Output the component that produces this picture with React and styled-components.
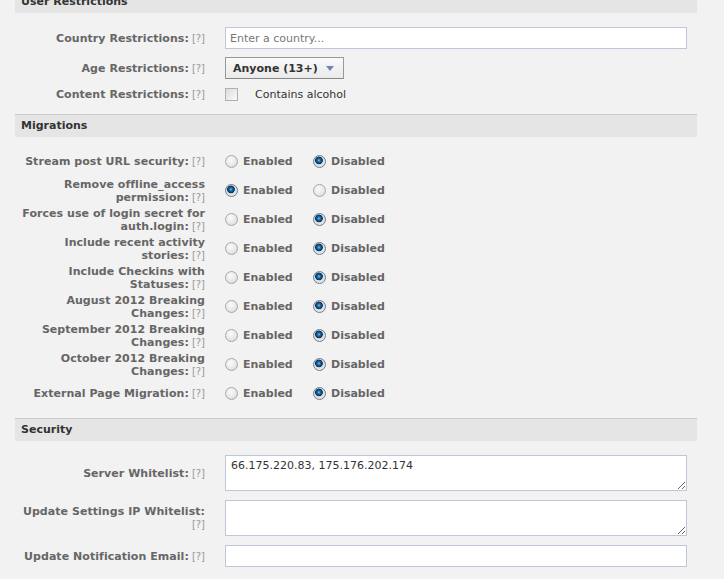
import React from 'react';
import styled, { createGlobalStyle } from 'styled-components';

const GlobalStyle = createGlobalStyle`
  html, body {
    margin: 0;
    padding: 0;
    background: #f2f2f2;
    font-family: "DejaVu Sans", Verdana, sans-serif;
    font-size: 11px;
    color: #333;
    overflow: hidden;
  }
`;

const Page = styled.div`
  width: 682px;
  margin: -10px 0 0 15px;
`;

const Section = styled.section``;

const Header = styled.div`
  height: 22px;
  line-height: 22px;
  background: #e5e5e5;
  border-top: 1px solid #cccccc;
  padding-left: 6px;
  font-weight: bold;
  font-size: 11px;
  color: #333;
`;

const Body = styled.div`
  padding: ${(p) => p.$pad || '10px 0'};
  display: flex;
  flex-direction: column;
  gap: ${(p) => p.$gap || 0}px;
`;

const Row = styled.div`
  display: grid;
  grid-template-columns: 190px 1fr;
  column-gap: 20px;
  align-items: center;
  min-height: ${(p) => p.$h || 22}px;
  padding-right: 10px;
`;

const Label = styled.div`
  text-align: right;
  font-weight: bold;
  color: #666;
  line-height: 13px;
  letter-spacing: 0.05px;
`;

const Help = styled.span`
  font-weight: normal;
  font-size: 10px;
  color: #999;
  margin-left: 3px;
  letter-spacing: 0;
`;

const TextInput = styled.input`
  box-sizing: border-box;
  width: 100%;
  height: 22px;
  border: 1px solid #bdc7d8;
  background: #fff;
  padding: 0 4px;
  font-family: "DejaVu Sans", Verdana, sans-serif;
  font-size: 11px;
  color: #333;
  outline: none;
  &::placeholder {
    color: #777;
  }
`;

const TextArea = styled.textarea`
  box-sizing: border-box;
  display: block;
  width: 100%;
  height: 36px;
  border: 1px solid #bdc7d8;
  background: #fff;
  padding: 3px 5px;
  font-family: "DejaVu Sans", Verdana, sans-serif;
  font-size: 11px;
  color: #333;
  outline: none;
  resize: both;
`;

const Dropdown = styled.button`
  box-sizing: border-box;
  display: inline-flex;
  align-items: center;
  gap: 8px;
  height: 22px;
  padding: 0 9px 0 7px;
  border: 1px solid #999;
  border-bottom-color: #888;
  background: linear-gradient(#f9f9f9, #eaeaea);
  font-family: "DejaVu Sans", Verdana, sans-serif;
  font-size: 11px;
  font-weight: bold;
  color: #333;
  justify-self: start;
`;

const Arrow = styled.span`
  width: 0;
  height: 0;
  border-left: 4px solid transparent;
  border-right: 4px solid transparent;
  border-top: 5px solid #6d84b4;
`;

const CheckLine = styled.label`
  display: flex;
  align-items: center;
  gap: 17px;
  color: #333;
`;

const Checkbox = styled.span`
  box-sizing: border-box;
  width: 13px;
  height: 13px;
  border: 1px solid #b0b0b0;
  background: linear-gradient(135deg, #dcdcdc, #fafafa);
`;

const Options = styled.div`
  display: flex;
`;

const Option = styled.label`
  width: 88px;
  display: flex;
  align-items: center;
  gap: 5px;
  font-weight: bold;
  color: #666;
`;

const Radio = styled.span`
  box-sizing: border-box;
  width: 13px;
  height: 13px;
  border-radius: 50%;
  border: 1px solid ${(p) => (p.$on ? '#6a7f93' : '#a8a8a8')};
  background: ${(p) =>
    p.$on
      ? 'radial-gradient(circle at 45% 40%, #7cc4f0 0, #1a6eae 1.5px, #0a2f55 3.5px, #dcdcdc 4.2px, #f4f4f4 100%)'
      : 'radial-gradient(circle at 40% 35%, #fbfbfb 0, #e6e6e6 60%, #cfcfcf 100%)'};
`;

const migrations = [
  ['Stream post URL security:', false],
  ['Remove offline_access permission:', true],
  ['Forces use of login secret for auth.login:', false],
  ['Include recent activity stories:', false],
  ['Include Checkins with Statuses:', false],
  ['August 2012 Breaking Changes:', false],
  ['September 2012 Breaking Changes:', false],
  ['October 2012 Breaking Changes:', false],
  ['External Page Migration:', false],
];

const Toggle = ({ enabled }) => (
  <Options>
    <Option>
      <Radio $on={enabled} />
      Enabled
    </Option>
    <Option>
      <Radio $on={!enabled} />
      Disabled
    </Option>
  </Options>
);

export default function App() {
  return (
    <>
      <GlobalStyle />
      <Page>
        <Section>
          <Header>User Restrictions</Header>
          <Body $pad="14px 0 13px" $gap={8}>
            <Row>
              <Label>
                Country Restrictions:<Help>[?]</Help>
              </Label>
              <TextInput placeholder="Enter a country..." />
            </Row>
            <Row>
              <Label>
                Age Restrictions:<Help>[?]</Help>
              </Label>
              <Dropdown>
                Anyone (13+)
                <Arrow />
              </Dropdown>
            </Row>
            <Row $h={14}>
              <Label>
                Content Restrictions:<Help>[?]</Help>
              </Label>
              <CheckLine>
                <Checkbox />
                Contains alcohol
              </CheckLine>
            </Row>
          </Body>
        </Section>

        <Section>
          <Header>Migrations</Header>
          <Body $pad="10px 0 10px">
            {migrations.map(([name, enabled]) => (
              <Row key={name} $h={29}>
                <Label>
                  {name}
                  <Help>[?]</Help>
                </Label>
                <Toggle enabled={enabled} />
              </Row>
            ))}
          </Body>
        </Section>

        <Section>
          <Header>Security</Header>
          <Body $pad="14px 0 10px" $gap={9}>
            <Row>
              <Label>
                Server Whitelist:<Help>[?]</Help>
              </Label>
              <TextArea defaultValue="66.175.220.83, 175.176.202.174" />
            </Row>
            <Row>
              <Label>
                Update Settings IP Whitelist:<Help>[?]</Help>
              </Label>
              <TextArea />
            </Row>
            <Row>
              <Label>
                Update Notification Email:<Help>[?]</Help>
              </Label>
              <TextInput />
            </Row>
          </Body>
        </Section>
      </Page>
    </>
  );
}
